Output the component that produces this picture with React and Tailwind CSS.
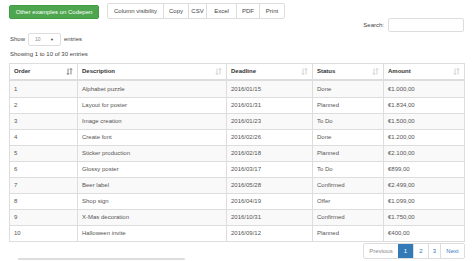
import React from "react";

const rows = [
  ["1", "Alphabet puzzle", "2016/01/15", "Done", "€1.000,00"],
  ["2", "Layout for poster", "2016/01/31", "Planned", "€1.834,00"],
  ["3", "Image creation", "2016/01/23", "To Do", "€1.500,00"],
  ["4", "Create font", "2016/02/26", "Done", "€1.200,00"],
  ["5", "Sticker production", "2016/02/18", "Planned", "€2.100,00"],
  ["6", "Glossy poster", "2016/03/17", "To Do", "€899,00"],
  ["7", "Beer label", "2016/05/28", "Confirmed", "€2.499,00"],
  ["8", "Shop sign", "2016/04/19", "Offer", "€1.099,00"],
  ["9", "X-Mas decoration", "2016/10/31", "Confirmed", "€1.750,00"],
  ["10", "Halloween invite", "2016/09/12", "Planned", "€400,00"],
];

const cols = [
  { name: "Order", w: "w-[67px]" },
  { name: "Description", w: "w-[149px]" },
  { name: "Deadline", w: "w-[86px]" },
  { name: "Status", w: "w-[71px]" },
  { name: "Amount", w: "" },
];

function SortIcon({ active }) {
  const c = active ? "#777" : "#ccc";
  return (
    <svg width="7" height="7" viewBox="0 0 7 7">
      <path d="M2 0.5V6.5M0.8 5.2L2 6.5L3.2 5.2" stroke={c} strokeWidth="0.9" fill="none" />
      <path d="M5 6.5V0.5M3.8 1.8L5 0.5L6.2 1.8" stroke={c} strokeWidth="0.9" fill="none" />
    </svg>
  );
}

export default function App() {
  return (
    <div
      className="w-[474px] h-[261px] bg-white overflow-hidden px-[9px] text-[#555] text-[6px]"
      style={{ fontFamily: '"Liberation Sans", Arial, sans-serif' }}
    >
      <div className="flex items-start pt-[3px] h-[19px]">
        <div className="mt-[2px] h-[14px] w-[90px] bg-[#4ea64e] border border-[#449d44] rounded-[2px] text-white flex items-center justify-center whitespace-nowrap">
          Other examples on Codepen
        </div>
        <div className="ml-[8px] flex h-[16px] border border-[#ddd] rounded-[2px] text-[#444]">
          <div className="w-[55px] flex items-center justify-center">Column visibility</div>
          <div className="w-[25px] flex items-center justify-center border-l border-[#ddd]">Copy</div>
          <div className="w-[18px] flex items-center justify-center border-l border-[#ddd]">CSV</div>
          <div className="w-[30px] flex items-center justify-center border-l border-[#ddd]">Excel</div>
          <div className="w-[23px] flex items-center justify-center border-l border-[#ddd]">PDF</div>
          <div className="w-[25px] flex items-center justify-center border-l border-[#ddd]">Print</div>
        </div>
      </div>
      <div className="flex justify-end items-center h-[14px] mt-[-1px] pr-[1px]">
        <span className="mr-[4px] text-[#444]">Search:</span>
        <div className="w-[76px] h-[14px] border border-[#ddd] rounded-[2px]"></div>
      </div>
      <div className="flex items-center h-[13px] mt-[1px] pl-[1px] text-[#444]">
        <span>Show</span>
        <div className="ml-[3px] w-[33px] h-[13px] border border-[#ddd] rounded-[2px] flex items-center px-[6px] justify-between text-[5px] text-[#888]">
          <span>10</span>
          <span className="text-[#444] text-[4px]">▼</span>
        </div>
        <span className="ml-[3px]">entries</span>
      </div>
      <div className="h-[17px] flex items-center pl-[1px] text-[#444]">Showing 1 to 10 of 30 entries</div>
      <div className="border border-[#ddd] w-[456px]">
        <div className="flex h-[17px] border-b-2 border-[#ddd] font-bold text-[#333]">
          {cols.map((c, i) => (
            <div
              key={c.name}
              className={`${c.w} ${i === 4 ? "flex-1" : ""} ${i > 0 ? "border-l border-[#ddd]" : ""} flex items-center justify-between px-[4px]`}
            >
              <span>{c.name}</span>
              <SortIcon active={i === 0} />
            </div>
          ))}
        </div>
        {rows.map((r, ri) => (
          <div
            key={r[0]}
            className={`flex h-[16px] ${ri > 0 ? "border-t border-[#ddd]" : ""} ${ri % 2 === 0 ? "bg-[#f9f9f9]" : "bg-white"}`}
          >
            {r.map((v, i) => (
              <div
                key={i}
                className={`${cols[i].w} ${i === 4 ? "flex-1" : ""} ${i > 0 ? "border-l border-[#ddd]" : ""} flex items-center px-[4px]`}
              >
                {v}
              </div>
            ))}
          </div>
        ))}
      </div>
      <div className="flex justify-end mt-[1px]">
        <div className="flex h-[16px] border border-[#ddd] rounded-[2px] text-[#337ab7]">
          <div className="w-[34px] flex items-center justify-center text-[#888]">Previous</div>
          <div className="w-[15px] flex items-center justify-center bg-[#337ab7] text-white">1</div>
          <div className="w-[15px] flex items-center justify-center border-l border-[#ddd]">2</div>
          <div className="w-[12px] flex items-center justify-center border-l border-[#ddd]">3</div>
          <div className="w-[24px] flex items-center justify-center border-l border-[#ddd]">Next</div>
        </div>
      </div>
      <div className="ml-[9px] mt-[-1px] w-[167px] h-[2px] bg-[#ddd] rounded-full"></div>
    </div>
  );
}
